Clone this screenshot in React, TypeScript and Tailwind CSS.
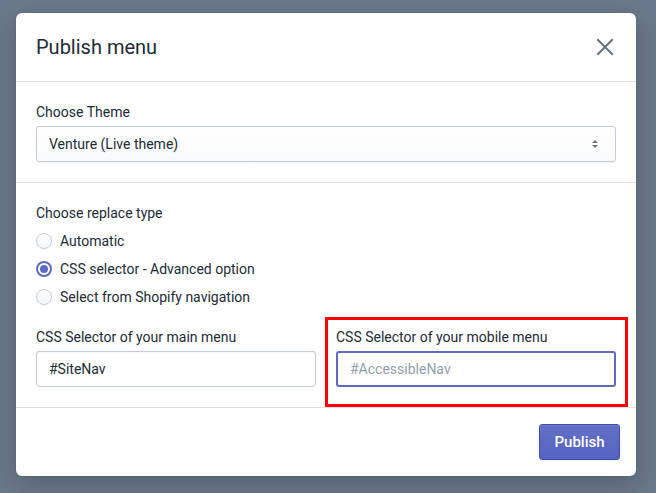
const options = [
  { label: "Automatic", checked: false },
  { label: "CSS selector - Advanced option", checked: true },
  { label: "Select from Shopify navigation", checked: false },
];

const Radio = ({ checked }: { checked: boolean }) =>
  checked ? (
    <span className="flex h-4 w-4 items-center justify-center rounded-full border-2 border-[#5c6ac4] bg-white">
      <span className="h-2 w-2 rounded-full bg-[#5c6ac4]" />
    </span>
  ) : (
    <span className="h-4 w-4 rounded-full border border-[#c4cdd5] bg-gradient-to-b from-white to-[#f4f6f8] shadow-[0_1px_0_rgba(22,29,37,0.05)]" />
  );

const App = () => {
  return (
    <div
      className="h-[493px] w-[656px] bg-[#6a788b] px-4 pt-[13px] text-[14px] text-[#212b36]"
      style={{ fontFamily: "Roboto, 'Liberation Sans', sans-serif" }}
    >
      <div className="w-[620px] rounded-md bg-white shadow-[0_0_0_1px_rgba(63,63,68,0.05),0_8px_24px_rgba(0,0,0,0.2)]">
        {/* header */}
        <div className="flex h-[69px] items-center justify-between border-b border-[#dfe3e8] pl-5 pr-5">
          <h2 className="text-[20px] leading-7 font-normal text-[#212b36]">Publish menu</h2>
          <svg width="20" height="20" viewBox="0 0 20 20" className="mr-[1px]">
            <path d="M3 3 L17 17 M17 3 L3 17" stroke="#637381" strokeWidth="2" strokeLinecap="square" />
          </svg>
        </div>

        {/* theme */}
        <div className="border-b border-[#dfe3e8] p-5">
          <div className="mb-1 leading-5">Choose Theme</div>
          <div className="flex h-9 items-center justify-between rounded-[3px] border border-[#c4cdd5] bg-gradient-to-b from-white to-[#f9fafb] pl-3 pr-4 shadow-[0_1px_0_rgba(22,29,37,0.05)]">
            <span>Venture (Live theme)</span>
            <svg width="8" height="12" viewBox="0 0 8 12">
              <path d="M4 2 L7 5 H1 Z M4 10 L1 7 H7 Z" fill="#637381" />
            </svg>
          </div>
        </div>

        {/* replace type */}
        <div className="border-b border-[#dfe3e8] p-5">
          <div className="leading-5">Choose replace type</div>
          <div className="mt-1 flex flex-col">
            {options.map((o, key) => (
              <div className="flex h-7 items-center gap-2" key={key}>
                <Radio checked={o.checked} />
                <span>{o.label}</span>
              </div>
            ))}
          </div>

          <div className="mt-4 grid grid-cols-2 gap-5">
            <div>
              <div className="mb-1 leading-5">CSS Selector of your main menu</div>
              <div className="flex h-9 items-center rounded-[3px] border border-[#c4cdd5] bg-white px-3 shadow-[inset_0_1px_0_rgba(99,115,129,0.05)]">
                #SiteNav
              </div>
            </div>
            <div className="relative">
              <div className="mb-1 leading-5">CSS Selector of your mobile menu</div>
              <div className="flex h-9 items-center rounded-[3px] border-2 border-[#5c6ac4] bg-white px-3 text-[#919eab]">
                #AccessibleNav
              </div>
              <div className="pointer-events-none absolute -top-[10px] -right-[12px] -bottom-[20px] -left-[11px] border-[3px] border-[#ff0000]" />
            </div>
          </div>
        </div>

        {/* footer */}
        <div className="flex justify-end px-4 pt-4 pb-4">
          <button className="h-9 w-[81px] rounded-[3px] border border-[#3f4eae] bg-gradient-to-b from-[#6371c7] to-[#5563c1] text-[15px] font-medium text-white shadow-[inset_0_1px_0_0_#6f7bcb,0_1px_0_0_rgba(22,29,37,0.05)]">
            Publish
          </button>
        </div>
      </div>
    </div>
  );
};

export default App;
